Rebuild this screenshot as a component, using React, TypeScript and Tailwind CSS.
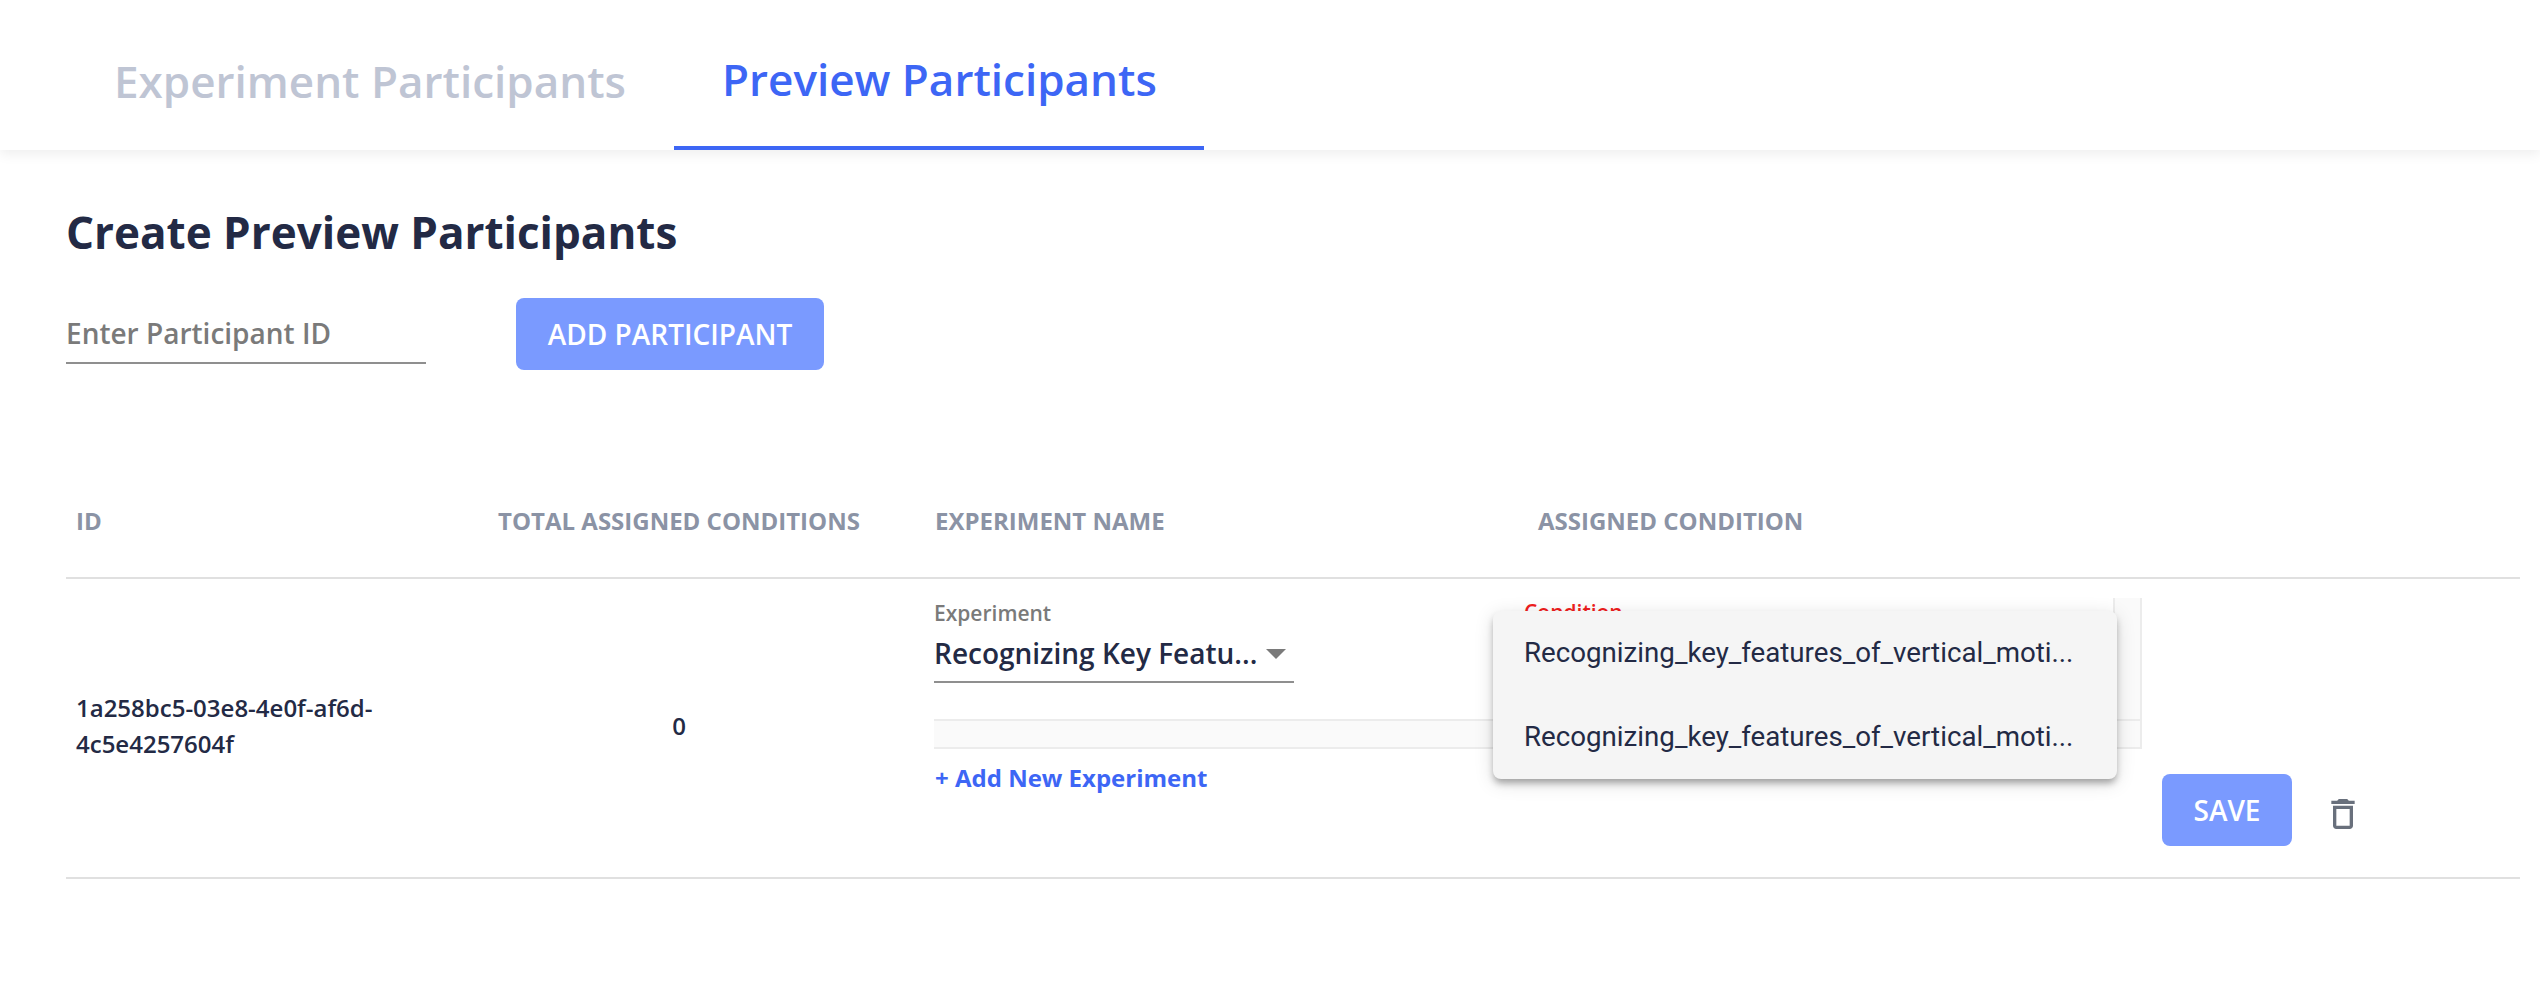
function DeleteIcon() {
  return (
    <svg viewBox="0 0 24 24" className="h-10 w-10 fill-[#69707c]">
      <path d="M6 19c0 1.1.9 2 2 2h8c1.1 0 2-.9 2-2V7H6v12zM8 9h8v10H8V9zm7.5-5l-1-1h-5l-1 1H5v2h14V4z" />
    </svg>
  );
}

function ConditionMenu() {
  const items = [
    "Recognizing_key_features_of_vertical_moti...",
    "Recognizing_key_features_of_vertical_moti...",
  ];
  return (
    <div className="absolute left-[559px] top-[13px] z-10 flex h-[168px] w-[624px] flex-col rounded-lg bg-[#f5f5f5] shadow-[0_5px_7px_-1px_rgba(0,0,0,0.32),0_4px_18px_2px_rgba(0,0,0,0.1)]">
      {items.map((item, i) => (
        <div
          key={i}
          className="flex h-[84px] items-center pl-[31px] font-['Roboto',sans-serif] text-[27.7px] text-[#232a45]"
        >
          {item}
        </div>
      ))}
    </div>
  );
}

export default function App() {
  return (
    <div className="min-h-[984px] bg-white font-['Open_Sans',sans-serif] text-[#232a45]">
      {/* Tabs */}
      <div className="flex h-[150px] pl-[67px] shadow-[0_4px_12px_rgba(0,0,0,0.07)]">
        <div className="flex w-[607px] items-center pl-[47px] pt-[12px] text-[44px] font-semibold text-[#bfc5d4]">
          Experiment Participants
        </div>
        <div className="flex w-[530px] items-center border-b-4 border-[#3d66f5] pl-[48px] pt-[12px] text-[44px] font-semibold whitespace-nowrap text-[#3d66f5]">
          Preview Participants
        </div>
      </div>

      <div className="pl-[66px] pr-[20px]">
        <h1 className="mt-[52px] text-[44px] leading-[60px] font-bold">
          Create Preview Participants
        </h1>

        {/* Add participant */}
        <div className="mt-[36px] flex items-start gap-[90px]">
          <div className="flex h-[66px] w-[360px] items-center border-b-2 border-[#8f8f8f] pt-[6px] text-[28px] font-semibold text-[#7a7a7a]">
            Enter Participant ID
          </div>
          <button className="flex h-[72px] w-[308px] items-center justify-center rounded-lg bg-[#7a9aff] text-[28px] font-semibold text-white">
            ADD PARTICIPANT
          </button>
        </div>

        {/* Table head */}
        <div className="mt-[122px] flex h-[87px] border-b-2 border-[#e0e0e0] pt-[11px] text-[24px] font-bold text-[#8b93a5]">
          <div className="w-[424px] pl-[10px]">ID</div>
          <div className="w-[378px] text-center whitespace-nowrap">TOTAL ASSIGNED CONDITIONS</div>
          <div className="w-[670px] pl-[67px]">EXPERIMENT NAME</div>
          <div>ASSIGNED CONDITION</div>
        </div>

        {/* Table row */}
        <div className="flex h-[300px] border-b-2 border-[#e0e0e0]">
          <div className="flex w-[424px] items-center pl-[10px] pb-[4px] text-[24px] leading-[36px] font-semibold">
            <span className="w-[320px] break-words">1a258bc5-03e8-4e0f-af6d-4c5e4257604f</span>
          </div>
          <div className="flex w-[378px] items-center justify-center pb-[4px] text-[24px] font-semibold">
            0
          </div>
          <div className="ml-[66px] flex w-[1208px] flex-col pt-[19px]">
            <div className="relative">
              <div className="flex h-[121px]">
                <div className="w-[360px] pt-[1px]">
                  <div className="text-[21px] leading-[28px] font-semibold text-[#7a7a7a]">Experiment</div>
                  <div className="mt-[4px] flex h-[52px] items-center border-b-2 border-[#8f8f8f] pb-[7px] text-[28px] font-semibold">
                    <span className="whitespace-nowrap">Recognizing Key Featu...</span>
                    <span className="ml-[9px] mt-[2px] h-0 w-0 border-x-[10px] border-t-[10px] border-x-transparent border-t-[#7a7a7a]" />
                  </div>
                </div>
                <div className="ml-[230px] text-[21px] leading-[28px] font-semibold text-[#f01e1e]">
                  Condition
                </div>
                <div className="ml-auto w-[29px] border-x-2 border-[#ececec] bg-[#fafafa]" />
              </div>
              <div className="h-[30px] border-y-2 border-r-2 border-[#ececec] bg-[#fafafa]" />
              <ConditionMenu />
            </div>
            <div className="mt-[12px] pl-[1px] text-[24px] leading-[33px] font-bold text-[#3d66f5]">
              + Add New Experiment
            </div>
          </div>
          <div className="ml-[20px] mt-[195px] flex h-[72px] items-center">
            <button className="flex h-[72px] w-[130px] items-center justify-center rounded-lg bg-[#7a9aff] text-[28px] font-semibold text-white">
              SAVE
            </button>
            <span className="ml-[31px] mt-[8px]">
              <DeleteIcon />
            </span>
          </div>
        </div>
      </div>
    </div>
  );
}
